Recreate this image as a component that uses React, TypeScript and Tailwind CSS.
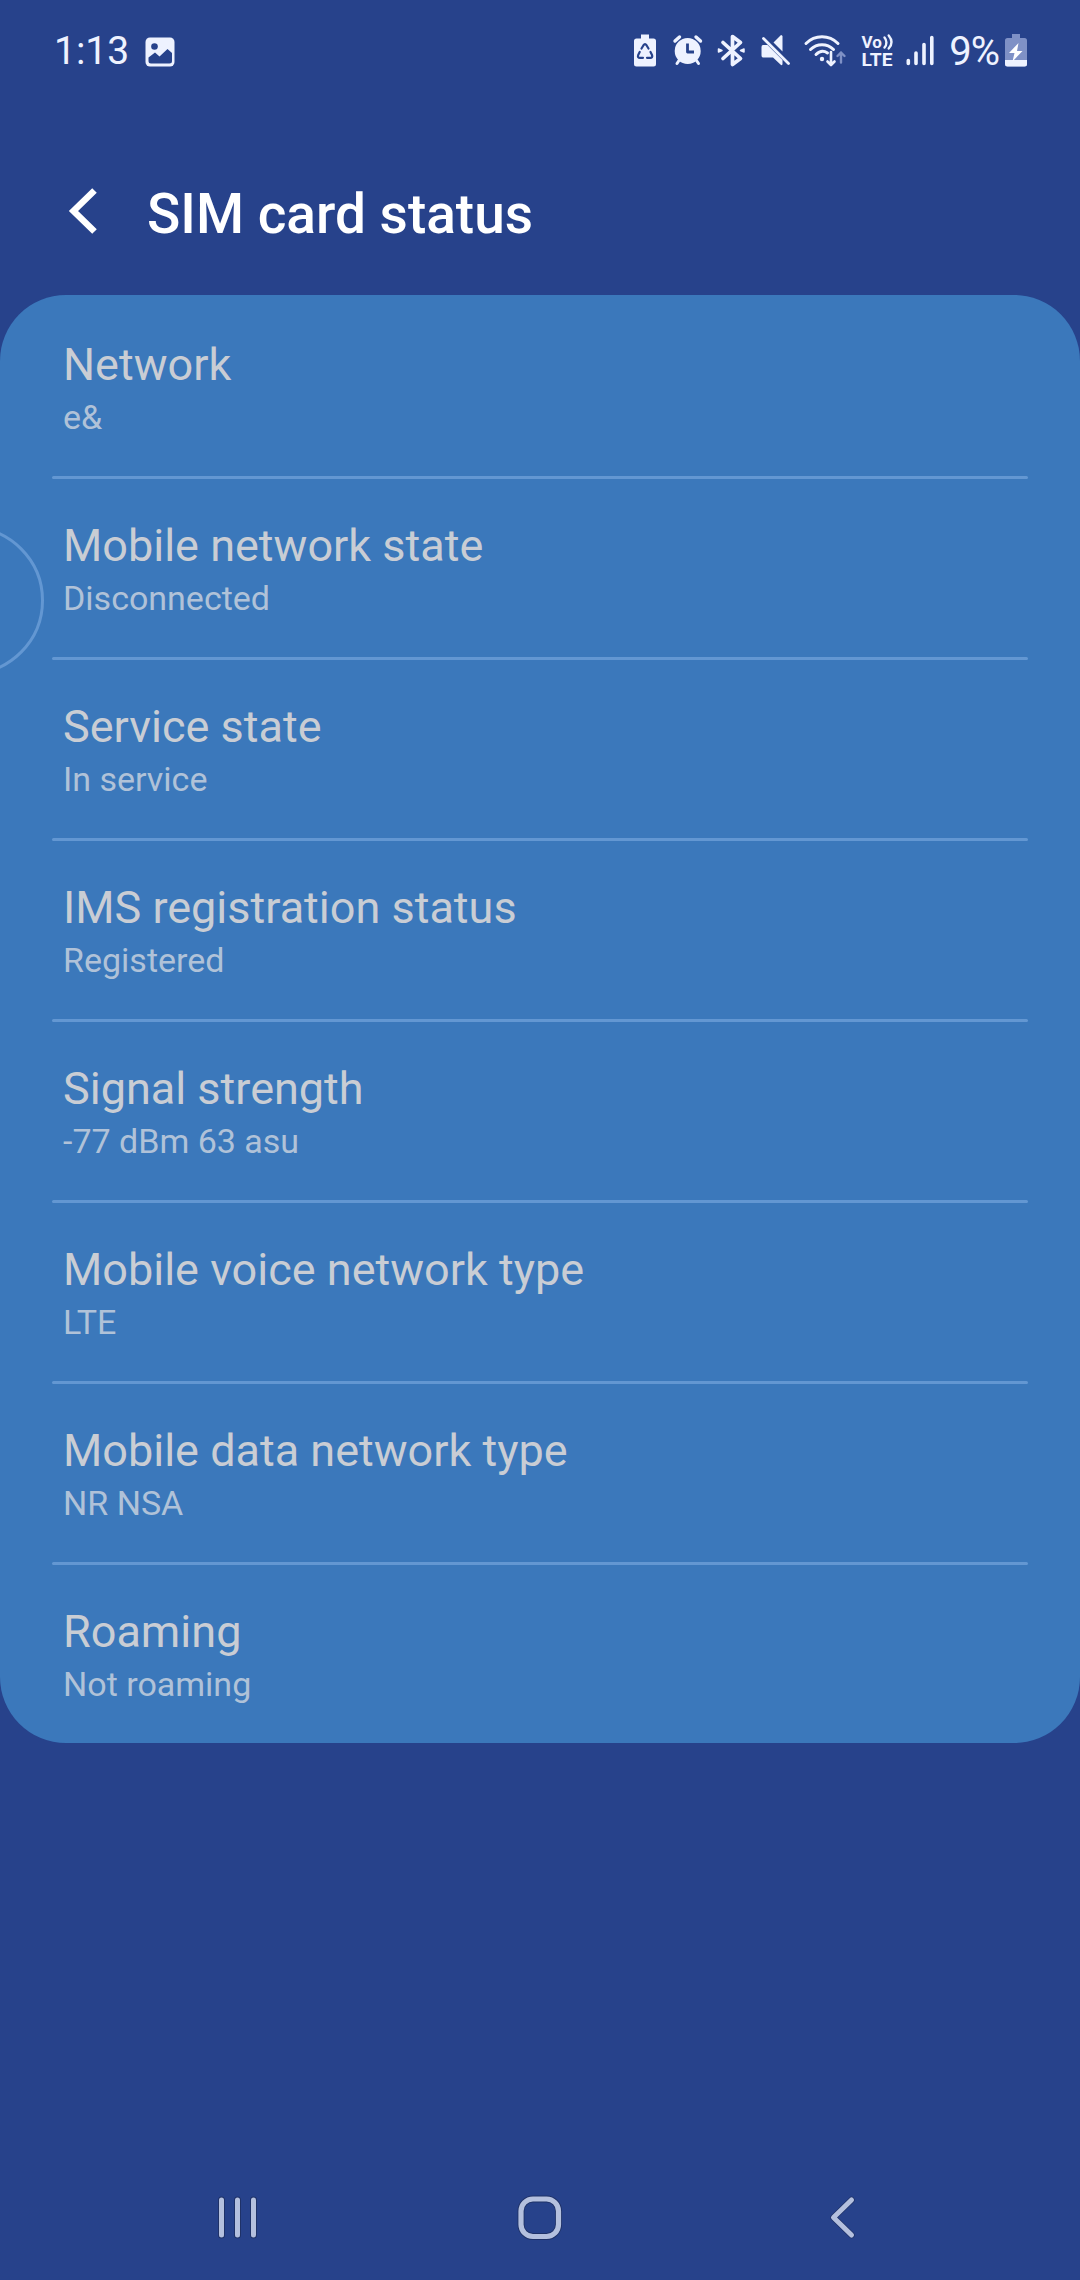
const rows = [
  { title: "Network", value: "e&" },
  { title: "Mobile network state", value: "Disconnected" },
  { title: "Service state", value: "In service" },
  { title: "IMS registration status", value: "Registered" },
  { title: "Signal strength", value: "-77 dBm 63 asu" },
  { title: "Mobile voice network type", value: "LTE" },
  { title: "Mobile data network type", value: "NR NSA" },
  { title: "Roaming", value: "Not roaming" },
];

export default function App() {
  return (
    <div className="relative flex h-[2280px] w-[1080px] flex-col overflow-hidden bg-[#27428b] font-[Roboto,sans-serif]">
      <StatusBar />

      <header className="flex h-[195px] items-center pt-[33px] pl-[67px]">
        <svg width="32" height="50" viewBox="0 0 32 50" fill="none" className="-mt-[7px] shrink-0" aria-label="Back">
          <path d="M27.500 4.500L6.500 25l21 20.500" stroke="#fff" strokeWidth="6.500" />
        </svg>
        <h1 className="ml-[48px] text-[55px] leading-none font-medium text-white">SIM card status</h1>
      </header>

      <main className="rounded-[66px] bg-[#3b78bb]">
        {rows.map((r, i) => (
          <Row key={r.title} title={r.title} value={r.value} first={i === 0} />
        ))}
      </main>

      {/* edge handle */}
      <div className="absolute top-[526px] -left-[105px] h-[149px] w-[149px] rounded-full border-[3px] border-[#6397d2]" />

      <NavBar />
    </div>
  );
}

function Row({ title, value, first }: { title: string; value: string; first: boolean }) {
  return (
    <section className="relative h-[181px] px-[63px] pt-[43px]">
      {!first && <div className="absolute top-0 right-[52px] left-[52px] h-[3px] rounded-full bg-[#6397d2]" />}
      <h2 className="text-[45px] leading-[53px] text-[#c9cdd4]">{title}</h2>
      <p className="mt-[5px] text-[34px] leading-[42px] text-[#b0c2d8]">{value}</p>
    </section>
  );
}

function StatusBar() {
  return (
    <div className="flex h-[100px] shrink-0 items-center pr-[53px] pl-[54px] text-[#eef2ff]">
      <span className="mt-[3px] text-[39px] leading-none">1:13</span>
      <svg width="30" height="30" viewBox="0 0 30 30" className="mt-[3px] ml-[16px]">
        <rect x="0.5" y="0.5" width="29" height="29" rx="4.5" fill="currentColor" />
        <circle cx="9.5" cy="9.5" r="3.3" fill="#27428b" />
        <path d="M3.500 20.500l6.500-5 4.500 4 8-7.500 4.500 4v8q0 2.500-2.500 2.500H6q-2.500 0-2.500-2.500z" fill="#27428b" />
      </svg>
      <StatusIcons />
    </div>
  );
}

function StatusIcons() {
  return (
    <div className="ml-auto flex items-center">
      <svg width="318" height="40" viewBox="630 30 318 40" fill="none" stroke="currentColor" strokeLinecap="round" strokeLinejoin="round">
        {/* power saving */}
        <path d="M641 34.500h8v4h4.500q2.500 0 2.500 2.500v23q0 2.500-2.500 2.500h-17q-2.500 0-2.500-2.500V41q0-2.500 2.500-2.500h4.500z" fill="currentColor" stroke="none" />
        <path
          d="M641.500 48.500l2-3.300q1.500-2.200 3 0l2 3.300M650.500 52l1.500 3q1 2.700-1.800 2.800h-3.200M643 57.800h-3q-2.800 0-1.800-2.800l1.500-3"
          stroke="#27428b"
          strokeWidth="2.200"
        />
        {/* alarm */}
        <circle cx="687.700" cy="51" r="13" fill="currentColor" stroke="none" />
        <path d="M675 41l4.500-4M700.500 41l-4.500-4" strokeWidth="3.400" />
        <path d="M679 60.500l-2 3M696.500 60.500l2 3" strokeWidth="3" />
        <path d="M687.500 43.500v8.500h6.500" stroke="#27428b" strokeWidth="2.800" strokeLinecap="butt" />
        {/* bluetooth */}
        <path d="M723 42.500L740.500 58.500l-8 6V36.500l8 6-17.500 16" strokeWidth="3.700" />
        <path d="M718.500 49l3.500 1.500-3.500 1.500zM744 49l-3.500 1.500 3.500 1.500z" fill="currentColor" strokeWidth="1.500" />
        {/* muted speaker */}
        <path d="M763 45h4.500l15 15v4q0 1.500-1.500 1l-8-7.500h-10q-1.500 0-1.500-2v-8.500q0-2 1.500-2z" fill="currentColor" stroke="none" />
        <path d="M773.500 42.500l7.500-7.500q1.500 0 1.500 1.500v15z" fill="currentColor" stroke="none" />
        <path d="M763.500 38.500L788.500 63.500" strokeWidth="2.800" />
        {/* wifi */}
        <path d="M806 43.500c9-9 23-9 32 0M810.500 49.500c6.500-6.500 16.500-6.500 23 0M816 54.500c4-4 8-4 11.500-1.500" strokeWidth="3" />
        <circle cx="822" cy="59" r="2.200" fill="currentColor" stroke="none" />
        <path d="M831 52v12.500M827.500 61.500l3.500 3.500 3.500-3.500" strokeWidth="2.600" />
        <path d="M841 62.500V52.500M837.500 56l3.500-3.500 3.500 3.500" stroke="#7f91c6" strokeWidth="2.400" />
        {/* volte */}
        <g fill="currentColor" stroke="none" className="font-[Roboto,sans-serif] font-bold">
          <text x="861.500" y="48" fontSize="17">Vo</text>
          <text x="861.500" y="66" fontSize="17.500" textLength="31" lengthAdjust="spacingAndGlyphs">LTE</text>
        </g>
        <path d="M884.500 37.500c2.500 3 2.500 7 0 10M888.700 35.500c3.700 4.500 3.700 9 0 13" strokeWidth="2.400" />
        {/* signal */}
        <path d="M908.300 60.500v3M916 53v10.500M924 44.500v19M931.800 37.500v26" strokeWidth="3.600" />
      </svg>
      <span className="mt-[3px] ml-[1px] text-[40px] leading-none tracking-[-1px]">9%</span>
      <svg width="22" height="34" viewBox="0 0 22 34" className="mt-[1px] ml-[6px]">
        <path d="M7 0h8v4h4.500q2.500 0 2.500 2.500V30q0 2.500-2.500 2.500h-17Q0 32.500 0 30V6.500Q0 4 2.500 4H7z" fill="#7f91c6" />
        <path d="M0 26h22v4q0 2.500-2.500 2.500h-17Q0 32.500 0 30z" fill="currentColor" />
        <path d="M13.500 9L4 19h5.500l-2 8.500L17.500 17h-5.500z" fill="#fff" />
      </svg>
    </div>
  );
}

function NavBar() {
  return (
    <nav className="mt-auto flex h-[126px] shrink-0 items-center justify-between px-[214px]">
      <svg width="48" height="50" viewBox="0 0 48 50" fill="none" strokeLinecap="round" aria-label="Recents">
        <path d="M7.500 8v35M23.500 8v35M39.500 8v35" stroke="#1f3268" strokeWidth="7" />
        <path d="M7.500 8v35M23.500 8v35M39.500 8v35" stroke="#b4c0de" strokeWidth="5" />
      </svg>
      <svg width="50" height="50" viewBox="0 0 50 50" fill="none" aria-label="Home">
        <rect x="6" y="7" width="37.500" height="37.500" rx="12" stroke="#1f3268" strokeWidth="7" />
        <rect x="6" y="7" width="37.500" height="37.500" rx="12" stroke="#b4c0de" strokeWidth="5.200" />
      </svg>
      <svg width="48" height="50" viewBox="0 0 48 50" fill="none" strokeLinecap="round" strokeLinejoin="round" aria-label="Back">
        <path d="M33.500 8L15.500 25.500l18 17.500" stroke="#1f3268" strokeWidth="6.500" />
        <path d="M33.500 8L15.500 25.500l18 17.500" stroke="#b4c0de" strokeWidth="5" />
      </svg>
    </nav>
  );
}
